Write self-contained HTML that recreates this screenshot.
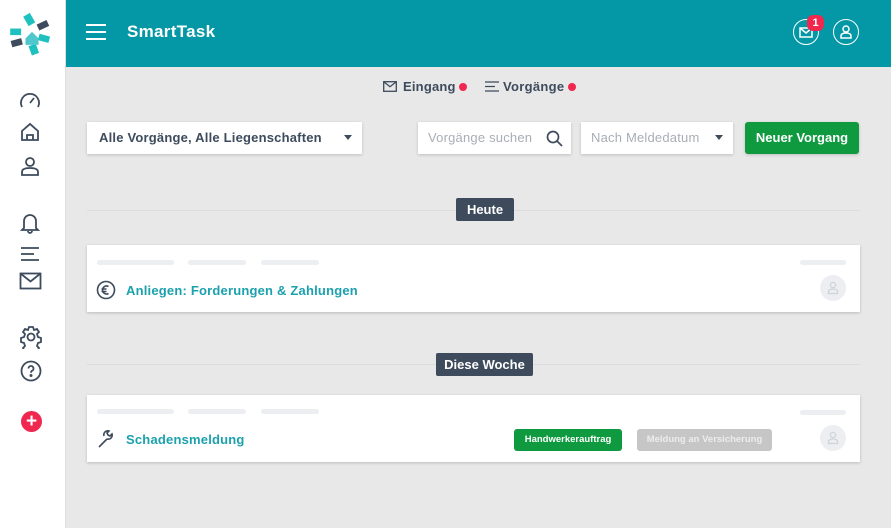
<!DOCTYPE html>
<html><head><meta charset="utf-8"><style>
*{box-sizing:border-box;margin:0;padding:0}
body{width:891px;height:528px;overflow:hidden;background:#e8e8e8;font-family:"Liberation Sans",sans-serif;position:relative;color:#3d4b5c}
.side{position:absolute;left:0;top:0;width:66px;height:528px;background:#fff;border-right:1px solid #ddd}
.top{position:absolute;left:66px;top:0;width:825px;height:67px;background:#0497a6}
.ab{position:absolute}
.ic{position:absolute;left:19px;stroke:#3d4b5c;fill:none;stroke-width:1.8}
.card{position:absolute;left:87px;width:773px;background:#fff;box-shadow:0 1px 3px rgba(0,0,0,.2)}
.bar{position:absolute;height:5px;background:#eceef1;border-radius:3px}
.ttl{position:absolute;left:39px;font-weight:bold;font-size:13px;color:#1ba1ae;letter-spacing:.2px}
.av{position:absolute;right:14px;width:26px;height:26px;border-radius:50%;background:#eceef1}
.lbl{position:absolute;background:#3d4b5c;color:#fff;font-weight:bold;font-size:13px;text-align:center;height:23px;line-height:23px;border-radius:2px}
.line{position:absolute;left:87px;width:773px;height:1px;background:#dcdcdc}
.box{position:absolute;top:122px;height:32px;background:#fff;box-shadow:0 1px 3px rgba(0,0,0,.18);font-size:13px;line-height:32px}
</style></head><body>
<div class="side">
<svg class="ab" style="left:8px;top:12px" width="48" height="44" viewBox="0 0 44 40">
<rect x="16" y="2" width="7" height="10" fill="#1ec0c0" transform="rotate(-30 19 7)"/>
<rect x="27" y="9" width="10" height="6" fill="#3d4b5c" transform="rotate(-25 32 12)"/>
<rect x="2" y="15" width="10" height="6" fill="#1ec0c0"/>
<rect x="3" y="25" width="10" height="6" fill="#3d4b5c" transform="rotate(-15 8 28)"/>
<rect x="28" y="21" width="10" height="6" fill="#1ec0c0" transform="rotate(15 33 24)"/>
<rect x="20" y="30" width="7" height="9" fill="#1ec0c0" transform="rotate(-20 23 34)"/>
<path d="M16 24 L22 18 L28 24 V30 H16Z" fill="#4fc7cc"/>
</svg>
<svg class="ic" style="top:90px" width="22" height="20"><path d="M3 17a9 9 0 1 1 16 0"/><path d="M11 13l4-5"/></svg>
<svg class="ic" style="top:121px" width="22" height="22"><path d="M3 10L11 3l8 7v9H3z"/><path d="M8 19v-5h6v5"/></svg>
<svg class="ic" style="top:155px" width="22" height="22"><circle cx="11" cy="7" r="4"/><path d="M3 20v-3c0-3 3-4 8-4s8 1 8 4v3z"/></svg>
<svg class="ic" style="top:211px" width="22" height="24"><path d="M5 17V10a6 6 0 0 1 12 0v7l2 2H3z"/><path d="M9 20a2 2 0 0 0 4 0"/></svg>
<svg class="ic" style="top:245px" width="22" height="18"><path d="M2 3h18M2 9h13M2 15h18"/></svg>
<svg class="ic" style="top:272px" width="24" height="18"><rect x="1.5" y="1.5" width="20" height="15"/><path d="M1.5 1.5l10 8 10-8"/></svg>
<svg class="ic" style="top:325px" width="24" height="24"><circle cx="12" cy="12" r="3.5"/><path d="M10 2h4l1 3 3-1 2 3-2 2 1 3 3 1v4l-3 1-1 3 2 2-2 3-3-1-1 3h-4l-1-3-3 1-2-3 2-2-1-3-3-1v-4l3-1 1-3-2-2 2-3 3 1z"/></svg>
<svg class="ic" style="top:359px" width="24" height="24"><circle cx="12" cy="12" r="9.5"/><path d="M9.5 9.5a2.5 2.5 0 1 1 3.5 2.3c-.8.4-1 1-1 2"/><circle cx="12" cy="16.5" r=".6" fill="#3d4b5c"/></svg>
<div class="ab" style="left:21px;top:411px;width:21px;height:21px;border-radius:50%;background:#f0284f;color:#fff;text-align:center;line-height:21px;font-size:19px;font-weight:bold">+</div>
</div>
<div class="top">
<svg class="ab" style="left:20px;top:23px" width="21" height="18"><path d="M0 2h20M0 9h20M0 16h20" stroke="#fff" stroke-width="2"/></svg>
<div class="ab" style="left:61px;top:22px;color:#fff;font-weight:bold;font-size:17px;letter-spacing:.3px">SmartTask</div>
<div class="ab" style="left:727px;top:19px;width:26px;height:26px;border:1.5px solid #fff;border-radius:50%"></div>
<svg class="ab" style="left:733px;top:27px" width="14" height="11"><rect x="1" y="1" width="12" height="9" fill="none" stroke="#fff" stroke-width="1.5"/><path d="M1 1l6 5 6-5" fill="none" stroke="#fff" stroke-width="1.5"/></svg>
<div class="ab" style="left:741px;top:15px;width:17px;height:16px;background:#f0284f;border-radius:6px;color:#fff;font-size:11px;font-weight:bold;text-align:center;line-height:16px">1</div>
<div class="ab" style="left:767px;top:19px;width:26px;height:26px;border:1.5px solid #fff;border-radius:50%"></div>
<svg class="ab" style="left:773px;top:24px" width="14" height="16" fill="none" stroke="#fff" stroke-width="1.5"><circle cx="7" cy="5" r="3"/><path d="M2 14v-2c0-2 2-3 5-3s5 1 5 3v2z"/></svg>
</div>
<svg class="ab" style="left:383px;top:81px" width="14" height="11" fill="none" stroke="#3d4b5c" stroke-width="1.3"><rect x=".7" y=".7" width="12.6" height="9.6"/><path d="M.7 .7l6.3 5 6.3-5"/></svg>
<div class="ab" style="left:403px;top:79px;font-weight:bold;font-size:13px;letter-spacing:.2px">Eingang</div>
<div class="ab" style="left:459px;top:83px;width:8px;height:8px;border-radius:50%;background:#f0284f"></div>
<svg class="ab" style="left:485px;top:81px" width="14" height="11" stroke="#3d4b5c" stroke-width="1.3"><path d="M0 1h14M0 5.5h10M0 10h14"/></svg>
<div class="ab" style="left:503px;top:79px;font-weight:bold;font-size:13px;letter-spacing:.3px">Vorgänge</div>
<div class="ab" style="left:568px;top:83px;width:8px;height:8px;border-radius:50%;background:#f0284f"></div>
<div class="box" style="left:87px;width:275px;font-weight:bold;padding-left:12px;letter-spacing:.2px">Alle Vorgänge, Alle Liegenschaften<span style="position:absolute;right:10px;top:13px;border:4px solid transparent;border-top:5px solid #3d4b5c"></span></div>
<div class="box" style="left:418px;width:153px;color:#a8aeb5;padding-left:10px;letter-spacing:.2px">Vorgänge suchen<svg class="ab" style="right:8px;top:8px" width="17" height="17" fill="none" stroke="#3d4b5c" stroke-width="1.7"><circle cx="7" cy="7" r="5.5"/><path d="M11 11l5 5"/></svg></div>
<div class="box" style="left:581px;width:152px;color:#a8aeb5;padding-left:10px;letter-spacing:.2px">Nach Meldedatum<span style="position:absolute;right:10px;top:13px;border:4px solid transparent;border-top:5px solid #3d4b5c"></span></div>
<div class="box" style="left:745px;width:114px;background:#0f9a3f;color:#fff;font-weight:bold;text-align:center;border-radius:3px">Neuer Vorgang</div>
<div class="line" style="top:210px"></div>
<div class="lbl" style="left:456px;top:198px;width:58px">Heute</div>
<div class="card" style="top:245px;height:67px">
<div class="bar" style="left:10px;top:15px;width:77px"></div><div class="bar" style="left:101px;top:15px;width:58px"></div><div class="bar" style="left:174px;top:15px;width:58px"></div><div class="bar" style="right:14px;top:15px;width:46px"></div>
<svg class="ab" style="left:9px;top:35px" width="20" height="20" fill="none" stroke="#3d4b5c" stroke-width="1.6"><circle cx="10" cy="10" r="8.5"/><path d="M12.5 6.5a4 4 0 1 0 0 7M5.5 9h5M5.5 11.5h5"/></svg>
<div class="ttl" style="top:38px">Anliegen: Forderungen &amp; Zahlungen</div>
<div class="av" style="top:30px"><svg class="ab" style="left:7px;top:6px" width="12" height="14" fill="none" stroke="#d0d4d9" stroke-width="1.3"><circle cx="6" cy="4" r="2.6"/><path d="M1.5 12.5v-2c0-1.5 2-2.5 4.5-2.5s4.5 1 4.5 2.5v2z"/></svg></div>
</div>
<div class="line" style="top:364px"></div>
<div class="lbl" style="left:436px;top:353px;width:97px">Diese Woche</div>
<div class="card" style="top:395px;height:67px">
<div class="bar" style="left:10px;top:14px;width:77px"></div><div class="bar" style="left:101px;top:14px;width:58px"></div><div class="bar" style="left:174px;top:14px;width:58px"></div><div class="bar" style="right:14px;top:15px;width:46px"></div>
<svg class="ab" style="left:10px;top:35px" width="19" height="19" fill="none" stroke="#3d4b5c" stroke-width="1.6"><path d="M2 17l8-8M10 9a4 4 0 0 0 5-5l-2 2-2-1-1-2 2-2a4 4 0 0 0-5 5"/></svg>
<div class="ttl" style="top:37px">Schadensmeldung</div>
<div class="ab" style="left:427px;top:34px;width:108px;height:22px;background:#0f9a3f;color:#fff;font-size:9.5px;font-weight:bold;text-align:center;line-height:22px;border-radius:3px">Handwerkerauftrag</div>
<div class="ab" style="left:550px;top:34px;width:135px;height:22px;background:#c6c6c6;color:#ececec;font-size:9.5px;font-weight:bold;text-align:center;line-height:22px;border-radius:3px">Meldung an Versicherung</div>
<div class="av" style="top:30px"><svg class="ab" style="left:7px;top:6px" width="12" height="14" fill="none" stroke="#d0d4d9" stroke-width="1.3"><circle cx="6" cy="4" r="2.6"/><path d="M1.5 12.5v-2c0-1.5 2-2.5 4.5-2.5s4.5 1 4.5 2.5v2z"/></svg></div>
</div>
</body></html>
